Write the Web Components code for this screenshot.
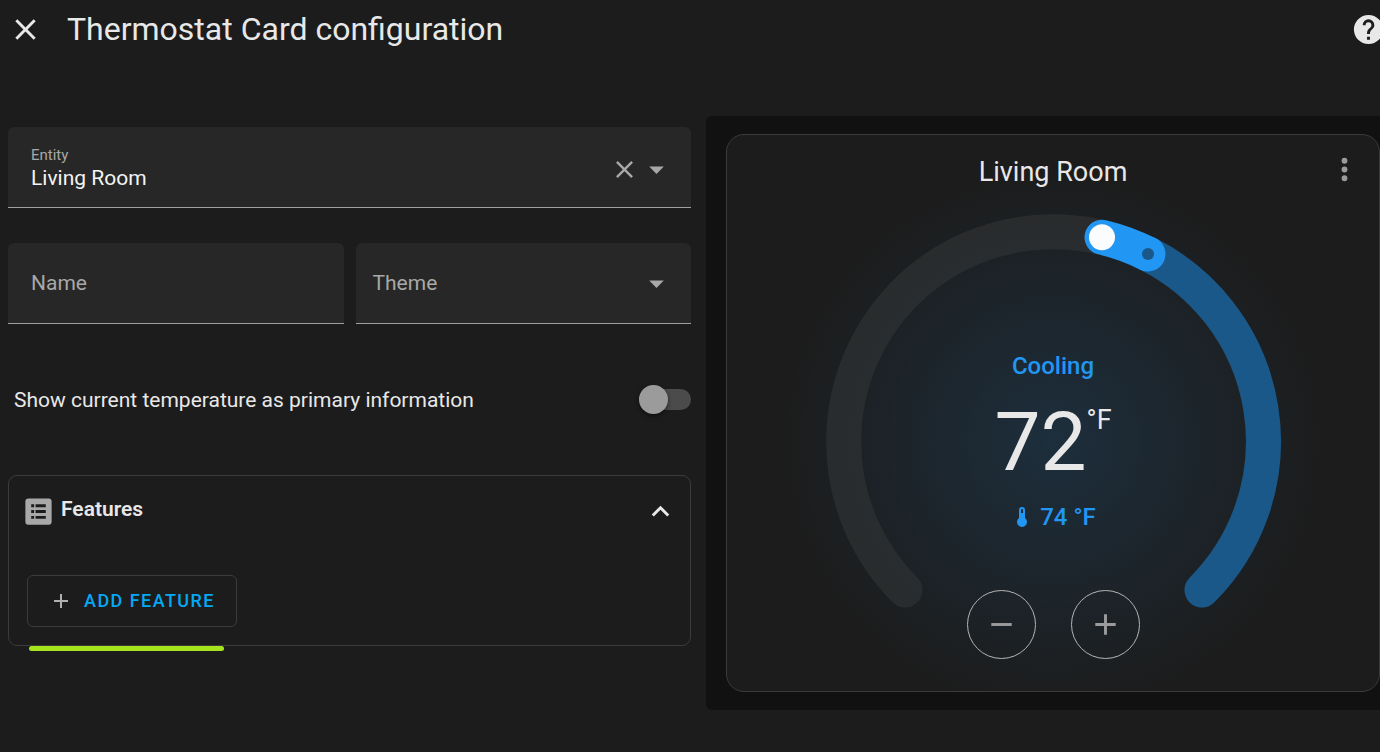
<!DOCTYPE html>
<html lang="en">
<head>
  <meta charset="utf-8">
  <title>Thermostat Card configuration</title>
  <style>
    :root {
      --bg: #1c1c1c;
      --field-bg: #272727;
      --text: #e8e8e8;
      --muted: #9b9b9b;
      --divider: #3b3b3b;
      --primary: #03a9f4;
      --cool: #2196f3;
    }

    body {
      margin: 0;
      background: var(--bg);
      color: var(--text);
      font: 21px/28px Roboto, sans-serif;
      overflow-x: hidden;
    }
  </style>
</head>
<body>
  <card-editor-dialog>
    <dialog-header slot="header">Thermostat Card configuration</dialog-header>

    <editor-field slot="form" kind="combo" label="Entity" value="Living Room"></editor-field>
    <field-row slot="form">
      <editor-field kind="text" label="Name"></editor-field>
      <editor-field kind="select" label="Theme"></editor-field>
    </field-row>
    <editor-switch slot="form">Show current temperature as primary information</editor-switch>
    <features-panel slot="form" heading="Features">
      <add-button>ADD FEATURE</add-button>
    </features-panel>

    <thermostat-card slot="preview" heading="Living Room" state="Cooling" target="72" current="74"></thermostat-card>
  </card-editor-dialog>

  <script>
    const ICONS = {
      close: "M19 6.41 17.59 5 12 10.59 6.41 5 5 6.41 10.59 12 5 17.59 6.41 19 12 13.41 17.59 19 19 17.59 13.41 12z",
      help: "M15.07 11.25l-.9.92C13.45 12.89 13 13.5 13 15h-2v-.5c0-1.11.45-2.11 1.17-2.83l1.24-1.26c.37-.36.59-.86.59-1.41a2 2 0 0 0-2-2 2 2 0 0 0-2 2H8a4 4 0 0 1 4-4 4 4 0 0 1 4 4c0 .88-.36 1.67-.93 2.25M13 19h-2v-2h2M12 2A10 10 0 0 0 2 12a10 10 0 0 0 10 10 10 10 0 0 0 10-10A10 10 0 0 0 12 2z",
      menuDown: "M7 10l5 5 5-5z",
      chevronUp: "M7.41 15.41 12 10.83l4.59 4.58L18 14l-6-6-6 6z",
      list: "M19 3H5a2 2 0 0 0-2 2v14a2 2 0 0 0 2 2h14a2 2 0 0 0 2-2V5a2 2 0 0 0-2-2M9 17H7v-2h2v2m0-4H7v-2h2v2m0-4H7V7h2v2m8 8h-7v-2h7v2m0-4h-7v-2h7v2m0-4h-7V7h7v2z",
      plus: "M19 13h-6v6h-2v-6H5v-2h6V5h2v6h6z",
      minus: "M19 13H5v-2h14z",
      dots: "M12 16a2 2 0 1 1 0 4 2 2 0 0 1 0-4m0-6a2 2 0 1 1 0 4 2 2 0 0 1 0-4m0-6a2 2 0 1 1 0 4 2 2 0 0 1 0-4z",
      thermometer: "M15 13V5a3 3 0 0 0-6 0v8a5 5 0 1 0 6 0m-3-9a1 1 0 0 1 1 1v3h-2V5a1 1 0 0 1 1-1z"
    }

    const icon = (name, size) =>
      `<svg width="${size}" height="${size}" viewBox="0 0 24 24" fill="currentColor" aria-hidden="true"><path d="${ICONS[name]}"/></svg>`

    const BASE = `
      *, *::before { box-sizing: border-box; }
      svg { display: block; flex: none; }
      button {
        display: flex;
        align-items: center;
        justify-content: center;
        margin: 0;
        padding: 0;
        border: 0;
        background: none;
        color: inherit;
        font: inherit;
        cursor: pointer;
      }
    `

    class CardEditorDialog extends HTMLElement {
      connectedCallback() {
        this.attachShadow({ mode: "open" }).innerHTML = `
          <style>
            ${BASE}
            :host { display: block; }
            main {
              display: grid;
              grid-template-columns: minmax(0, 683fr) minmax(0, 674fr);
              gap: 15px;
              align-items: start;
              padding: 58px 0 40px 8px;
            }
            .form {
              display: flex;
              flex-direction: column;
              gap: 35px;
              padding-top: 11px;
            }
            .preview {
              padding: 18px 0 18px 20px;
              background: #111;
              border-radius: 6px 0 0 6px;
            }
          </style>
          <slot name="header"></slot>
          <main>
            <div class="form"><slot name="form"></slot></div>
            <div class="preview"><slot name="preview"></slot></div>
          </main>
        `
      }
    }

    class DialogHeader extends HTMLElement {
      connectedCallback() {
        this.attachShadow({ mode: "open" }).innerHTML = `
          <style>
            ${BASE}
            :host {
              display: flex;
              align-items: center;
              height: 58px;
              padding-left: 8px;
            }
            h1 {
              flex: 1;
              margin: 0 0 0 24px;
              font-size: 32px;
              line-height: 40px;
              font-weight: 400;
            }
            .help { margin-right: -6px; }
          </style>
          <button aria-label="Close">${icon("close", 35)}</button>
          <h1><slot></slot></h1>
          <button class="help" aria-label="Help">${icon("help", 35)}</button>
        `
      }
    }

    class FieldRow extends HTMLElement {
      connectedCallback() {
        this.attachShadow({ mode: "open" }).innerHTML = `
          <style>
            :host {
              display: grid;
              grid-template-columns: 1fr 1fr;
              gap: 12px;
            }
          </style>
          <slot></slot>
        `
      }
    }

    class EditorField extends HTMLElement {
      connectedCallback() {
        const kind = this.getAttribute("kind")
        const label = this.getAttribute("label")
        const value = this.getAttribute("value") || ""

        const control = kind === "select"
          ? `<select id="control"><option value=""></option></select>`
          : `<input id="control" type="text" value="${value}" autocomplete="off">`

        this.attachShadow({ mode: "open" }).innerHTML = `
          <style>
            ${BASE}
            :host { display: block; }
            .field {
              display: grid;
              grid-template-columns: minmax(0, 1fr) auto;
              align-items: center;
              height: 81px;
              background: var(--field-bg);
              border-bottom: 1px solid #a0a0a0;
              border-radius: 6px 6px 0 0;
            }
            label, input, select { grid-area: 1 / 1; }
            label {
              padding-left: 23px;
              color: #a8a8a8;
              pointer-events: none;
            }
            select ~ label { padding-left: 17px; }
            input, select {
              grid-column: 1 / -1;
              align-self: stretch;
              width: 100%;
              min-width: 0;
              margin: 0;
              padding: 0 23px;
              border: 0;
              outline: 0;
              appearance: none;
              background: none;
              color: #f4f4f4;
              font: inherit;
            }
            .filled input { padding-top: 22px; }
            .filled label {
              align-self: start;
              padding-top: 18px;
              font-size: 15px;
              line-height: 20px;
            }
            .icons {
              grid-area: 1 / 2;
              display: flex;
              align-items: center;
              padding-right: 17px;
              color: #a8a8a8;
            }
            .filled .icons { padding-top: 4px; }
            .icons > svg { pointer-events: none; }
          </style>
          <div class="field ${value ? "filled" : ""}">
            ${control}
            <label for="control">${label}</label>
            <div class="icons">
              ${kind === "combo" ? `<button aria-label="Clear">${icon("close", 29)}</button>` : ""}
              ${kind === "text" ? "" : icon("menuDown", 35)}
            </div>
          </div>
        `

        const clear = this.shadowRoot.querySelector("button")
        if (clear) {
          clear.addEventListener("click", () => {
            this.shadowRoot.querySelector("input").value = ""
          })
        }
      }
    }

    class EditorSwitch extends HTMLElement {
      connectedCallback() {
        this.attachShadow({ mode: "open" }).innerHTML = `
          <style>
            ${BASE}
            :host {
              display: flex;
              align-items: center;
              justify-content: space-between;
              height: 81px;
              padding-left: 6px;
            }
            input {
              display: flex;
              align-items: center;
              flex: none;
              width: 52px;
              height: 21px;
              margin: 0;
              appearance: none;
              border-radius: 11px;
              background: #4b4b4b;
              cursor: pointer;
            }
            input::before {
              content: "";
              flex: none;
              width: 29px;
              height: 29px;
              border-radius: 50%;
              background: var(--muted);
              box-shadow: 0 2px 4px rgba(0, 0, 0, 0.5);
            }
            input:checked { justify-content: flex-end; }
            input:checked::before { background: var(--primary); }
          </style>
          <label for="toggle"><slot></slot></label>
          <input id="toggle" type="checkbox" role="switch">
        `
      }
    }

    class FeaturesPanel extends HTMLElement {
      connectedCallback() {
        this.attachShadow({ mode: "open" }).innerHTML = `
          <style>
            ${BASE}
            :host { display: block; }
            section {
              padding: 17px 12px 18px 12px;
              border: 1px solid var(--divider);
              border-radius: 9px;
            }
            .head {
              display: flex;
              align-items: center;
              gap: 5px;
              height: 36px;
            }
            .head > svg { color: #a8a8a8; }
            h2 {
              flex: 1;
              margin: 0 0 4px;
              font-size: 21px;
              line-height: 28px;
              font-weight: 600;
            }
            .content { padding: 46px 0 0 6px; }
            .marker {
              width: 195px;
              height: 5px;
              margin-left: 21px;
              border-radius: 3px;
              background: #a5e31c;
            }
          </style>
          <section>
            <div class="head">
              ${icon("list", 35)}
              <h2>${this.getAttribute("heading")}</h2>
              <button aria-label="Collapse" aria-expanded="true">${icon("chevronUp", 35)}</button>
            </div>
            <div class="content"><slot></slot></div>
          </section>
          <div class="marker"></div>
        `

        const toggle = this.shadowRoot.querySelector("button")
        toggle.addEventListener("click", () => {
          const content = this.shadowRoot.querySelector(".content")
          content.hidden = !content.hidden
          toggle.setAttribute("aria-expanded", !content.hidden)
        })
      }
    }

    class AddButton extends HTMLElement {
      connectedCallback() {
        this.attachShadow({ mode: "open" }).innerHTML = `
          <style>
            ${BASE}
            :host { display: inline-block; vertical-align: top; }
            button {
              gap: 11px;
              height: 52px;
              padding: 0 21px;
              border: 1px solid var(--divider);
              border-radius: 6px;
              color: var(--primary);
              font-size: 18px;
              font-weight: 500;
              letter-spacing: 0.08em;
            }
            svg { color: #b0b0b0; }
          </style>
          <button>${icon("plus", 24)}<span><slot></slot></span></button>
        `
      }
    }

    class ThermostatCard extends HTMLElement {
      connectedCallback() {
        this.attachShadow({ mode: "open" }).innerHTML = `
          <style>
            ${BASE}
            :host {
              display: block;
              box-sizing: border-box;
              padding-bottom: 22px;
              overflow: hidden;
              background: var(--bg);
              border: 1px solid var(--divider);
              border-radius: 18px;
            }
            header {
              display: grid;
              grid-template-columns: 34px 1fr 34px;
              align-items: center;
              height: 79px;
              padding: 0 18px;
            }
            h2 {
              grid-column: 2;
              margin: 0 0 6px;
              font-size: 27px;
              line-height: 36px;
              font-weight: 400;
              text-align: center;
            }
            header button {
              margin-bottom: 10px;
              color: var(--muted);
            }
          </style>
          <header>
            <h2>${this.getAttribute("heading")}</h2>
            <button aria-label="More options">${icon("dots", 35)}</button>
          </header>
          <temperature-dial state="${this.getAttribute("state")}" target="${this.getAttribute("target")}" current="${this.getAttribute("current")}"></temperature-dial>
        `
      }
    }

    class TemperatureDial extends HTMLElement {
      connectedCallback() {
        this.attachShadow({ mode: "open" }).innerHTML = `
          <style>
            ${BASE}
            :host {
              display: grid;
              justify-content: center;
              justify-items: center;
            }
            .ring, .info { grid-area: 1 / 1; }
            .ring { overflow: visible; }
            .arc {
              fill: none;
              stroke-width: 35;
              stroke-linecap: round;
            }
            .info {
              display: flex;
              flex-direction: column;
              align-items: center;
              padding-top: 136px;
              z-index: 1;
            }
            .state, .current {
              color: var(--cool);
              font-size: 24px;
              line-height: 32px;
              font-weight: 500;
            }
            .target {
              display: flex;
              margin: 25px 0 24px;
              font-size: 82px;
              line-height: 70px;
            }
            .target sup {
              font-size: 27px;
              line-height: 26px;
              vertical-align: baseline;
            }
            .current {
              display: flex;
              align-items: center;
              gap: 6px;
            }
            .controls {
              display: flex;
              gap: 35px;
              margin-top: 57px;
              color: var(--muted);
            }
            .controls button {
              width: 69px;
              height: 69px;
              border: 1px solid #b4b4b4;
              border-radius: 50%;
            }
          </style>
          <svg class="ring" width="455" height="455" viewBox="0 0 455 455" aria-hidden="true">
            <defs>
              <radialGradient id="glow">
                <stop offset="0" stop-color="#2196f3" stop-opacity="0.15"/>
                <stop offset="1" stop-color="#2196f3" stop-opacity="0"/>
              </radialGradient>
            </defs>
            <circle cx="227.5" cy="227.5" r="273" fill="url(#glow)"/>
            <path class="arc" stroke="#464646" stroke-opacity="0.33" d="M79 376A210 210 0 1 1 376 376"/>
            <path class="arc" stroke="#1a588a" d="M322 40A210 210 0 0 1 376 376"/>
            <path class="arc" stroke="#2196f3" d="M276 23.2A210 210 0 0 1 322 40"/>
            <circle cx="276" cy="23.2" r="13" fill="#fafcfe"/>
            <circle cx="322" cy="40" r="6" fill="#1a588a"/>
          </svg>
          <div class="info">
            <div class="state">${this.getAttribute("state")}</div>
            <div class="target"><span>${this.getAttribute("target")}</span><sup>°F</sup></div>
            <div class="current">${icon("thermometer", 24)}<span>${this.getAttribute("current")} °F</span></div>
            <div class="controls">
              <button aria-label="Decrease" data-step="-1">${icon("minus", 35)}</button>
              <button aria-label="Increase" data-step="1">${icon("plus", 35)}</button>
            </div>
          </div>
        `

        const target = this.shadowRoot.querySelector(".target span")
        this.shadowRoot.querySelectorAll("button").forEach((button) => {
          button.addEventListener("click", () => {
            target.textContent = Number(target.textContent) + Number(button.dataset.step)
          })
        })
      }
    }

    customElements.define("card-editor-dialog", CardEditorDialog)
    customElements.define("dialog-header", DialogHeader)
    customElements.define("field-row", FieldRow)
    customElements.define("editor-field", EditorField)
    customElements.define("editor-switch", EditorSwitch)
    customElements.define("features-panel", FeaturesPanel)
    customElements.define("add-button", AddButton)
    customElements.define("thermostat-card", ThermostatCard)
    customElements.define("temperature-dial", TemperatureDial)
  </script>
</body>
</html>
